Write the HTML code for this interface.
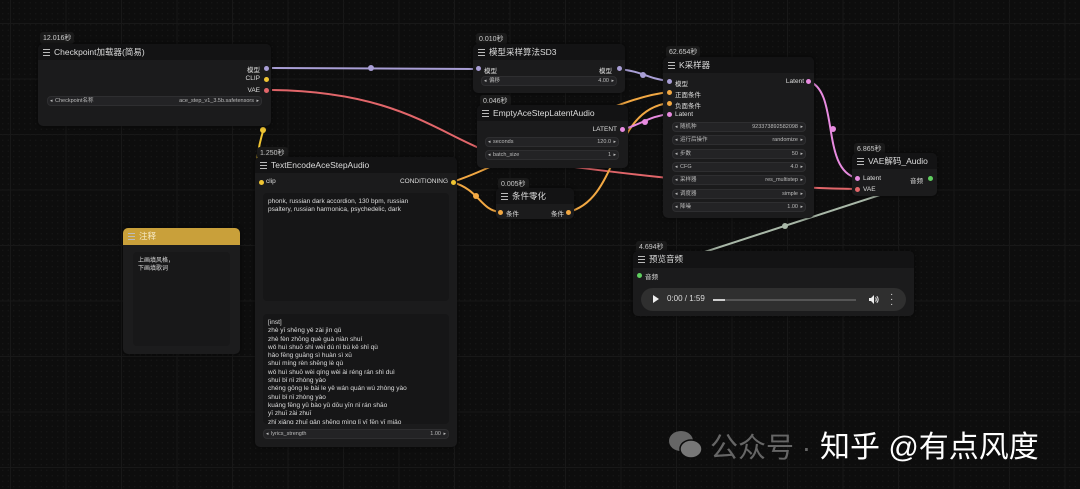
<!DOCTYPE html>
<html><head><meta charset="utf-8"><style>
*{margin:0;padding:0;box-sizing:border-box}
body{width:1080px;height:489px;overflow:hidden;background:#0d0d0d;position:relative;font-family:"Liberation Sans","Noto Sans CJK SC",sans-serif;color:#ddd}
.grid{position:absolute;inset:0;background-image:linear-gradient(#181818 1px,transparent 1px),linear-gradient(90deg,#181818 1px,transparent 1px);background-size:55.5px 55.5px;background-position:10px 23px}
.dots{position:absolute;inset:0;background-image:radial-gradient(#161616 0.6px,transparent 0.8px);background-size:5.5px 5.5px}
.node{position:absolute;background:#1b1b1c;border-radius:5px;box-shadow:0 0 4px rgba(0,0,0,.6)}
.hd{height:16px;background:#131314;border-radius:5px 5px 0 0;font-size:8.5px;line-height:16px;padding-left:16px;position:relative;color:#ddd;white-space:nowrap}
.hd:before{content:"";position:absolute;left:5px;top:5px;width:7px;height:5px;border-top:1px solid #bbb;border-bottom:1px solid #bbb}
.hd:after{content:"";position:absolute;left:5px;top:7.5px;width:7px;height:1px;background:#bbb}
.badge{position:absolute;font-size:7px;color:#ccc;background:#1a1a1a;padding:1px 3px;border-radius:3px;white-space:nowrap}
.lbl{position:absolute;font-size:6.5px;color:#ddd;white-space:nowrap}
.dot{position:absolute;width:5px;height:5px;border-radius:50%}
.w{position:absolute;height:10px;background:#232325;border:1px solid #2e2e30;border-radius:4px;font-size:5.5px;line-height:8px;color:#bbb;padding:0 7px;white-space:nowrap}
.w span{float:right}
.w:before{content:"◂";position:absolute;left:2px;font-size:5px}
.w:after{content:"▸";position:absolute;right:2px;font-size:5px;top:0}
.ta{position:absolute;background:#161617;border-radius:4px;font-size:6.5px;line-height:8.3px;color:#ddd;padding:5px 5px;overflow:hidden}
</style></head><body>
<div class="grid"></div><div class="dots"></div>
<svg width="1080" height="489" style="position:absolute;left:0;top:0" fill="none">
<path d="M272,68 L478,69" stroke="#a99fd6" stroke-width="2"/>
<path d="M619,69 C645,72 645,78 669,81" stroke="#a99fd6" stroke-width="2"/>
<path d="M272,90 C420,92 450,150 520,160 C600,170 700,186 857,189" stroke="#e2666a" stroke-width="2"/>
<path d="M264,128 C257,150 255,170 259,182" stroke="#f0c533" stroke-width="2"/>
<path d="M452,182 C520,160 600,100 669,92" stroke="#f2a843" stroke-width="2"/>
<path d="M452,182 C480,190 480,210 500,212" stroke="#f2a843" stroke-width="2"/>
<path d="M568,212 C620,200 610,110 669,103" stroke="#f2a843" stroke-width="2"/>
<path d="M621,130 C640,125 650,116 669,114" stroke="#e88be0" stroke-width="2"/>
<path d="M808,81 C840,90 820,170 857,178" stroke="#e88be0" stroke-width="2"/>
<path d="M932,178 L640,273" stroke="#a9b8a8" stroke-width="2"/>
<circle cx="371" cy="68" r="3" fill="#a99fd6"/><circle cx="643" cy="75" r="3" fill="#a99fd6"/>
<circle cx="263" cy="130" r="3" fill="#f0c533"/><circle cx="476" cy="196" r="3" fill="#f2a843"/>
<circle cx="645" cy="122" r="3" fill="#e88be0"/><circle cx="833" cy="129" r="3" fill="#e88be0"/>
<circle cx="785" cy="226" r="3" fill="#a9b8a8"/>
</svg>

<div class="badge" style="left:40px;top:32px">12.016秒</div>
<div class="node" style="left:38px;top:44px;width:233px;height:82px"><div class="hd">Checkpoint加载器(简易)</div></div>
<div class="lbl" style="right:820px;top:64px">模型</div><div class="dot" style="left:264px;top:66px;background:#a99fd6"></div>
<div class="lbl" style="right:820px;top:75px">CLIP</div><div class="dot" style="left:264px;top:77px;background:#f0c533"></div>
<div class="lbl" style="right:820px;top:87px">VAE</div><div class="dot" style="left:264px;top:88px;background:#e2666a"></div>
<div class="w" style="left:47px;top:96px;width:215px">Checkpoint名称<span>ace_step_v1_3.5b.safetensors</span></div>

<div class="badge" style="left:476px;top:33px">0.010秒</div>
<div class="node" style="left:473px;top:44px;width:152px;height:49px"><div class="hd">模型采样算法SD3</div></div>
<div class="dot" style="left:476px;top:66px;background:#a99fd6"></div><div class="lbl" style="left:484px;top:65px">模型</div>
<div class="lbl" style="right:468px;top:65px">模型</div><div class="dot" style="left:617px;top:66px;background:#a99fd6"></div>
<div class="w" style="left:481px;top:76px;width:136px">偏移<span>4.00</span></div>

<div class="badge" style="left:480px;top:95px">0.046秒</div>
<div class="node" style="left:477px;top:105px;width:151px;height:63px"><div class="hd">EmptyAceStepLatentAudio</div></div>
<div class="lbl" style="right:463px;top:126px">LATENT</div><div class="dot" style="left:620px;top:127px;background:#e88be0"></div>
<div class="w" style="left:485px;top:137px;width:134px">seconds<span>120.0</span></div>
<div class="w" style="left:485px;top:150px;width:134px">batch_size<span>1</span></div>

<div class="badge" style="left:666px;top:46px">62.654秒</div>
<div class="node" style="left:663px;top:57px;width:151px;height:161px"><div class="hd">K采样器</div></div>
<div class="dot" style="left:667px;top:79px;background:#a99fd6"></div><div class="lbl" style="left:675px;top:78px">模型</div>
<div class="lbl" style="right:276px;top:78px">Latent</div><div class="dot" style="left:806px;top:79px;background:#e88be0"></div>
<div class="dot" style="left:667px;top:90px;background:#f2a843"></div><div class="lbl" style="left:675px;top:89px">正面条件</div>
<div class="dot" style="left:667px;top:101px;background:#f2a843"></div><div class="lbl" style="left:675px;top:100px">负面条件</div>
<div class="dot" style="left:667px;top:112px;background:#e88be0"></div><div class="lbl" style="left:675px;top:111px">Latent</div>
<div class="w" style="left:672px;top:122px;width:134px">随机种<span>923373892582098</span></div>
<div class="w" style="left:672px;top:135px;width:134px">运行后操作<span>randomize</span></div>
<div class="w" style="left:672px;top:149px;width:134px">步数<span>50</span></div>
<div class="w" style="left:672px;top:162px;width:134px">CFG<span>4.0</span></div>
<div class="w" style="left:672px;top:175px;width:134px">采样器<span>res_multistep</span></div>
<div class="w" style="left:672px;top:189px;width:134px">调度器<span>simple</span></div>
<div class="w" style="left:672px;top:202px;width:134px">降噪<span>1.00</span></div>

<div class="badge" style="left:854px;top:143px">6.865秒</div>
<div class="node" style="left:852px;top:153px;width:85px;height:43px"><div class="hd">VAE解码_Audio</div></div>
<div class="dot" style="left:855px;top:176px;background:#e88be0"></div><div class="lbl" style="left:863px;top:175px">Latent</div>
<div class="dot" style="left:855px;top:187px;background:#e2666a"></div><div class="lbl" style="left:863px;top:186px">VAE</div>
<div class="lbl" style="left:910px;top:175px">音频</div><div class="dot" style="left:928px;top:176px;background:#5fce5f"></div>

<div class="badge" style="left:257px;top:147px">1.250秒</div>
<div class="node" style="left:255px;top:157px;width:202px;height:290px"><div class="hd">TextEncodeAceStepAudio</div></div>
<div class="dot" style="left:259px;top:180px;background:#f0c533"></div><div class="lbl" style="left:266px;top:178px">clip</div>
<div class="lbl" style="right:632px;top:178px">CONDITIONING</div><div class="dot" style="left:451px;top:180px;background:#f0c533"></div>
<div class="ta" style="left:263px;top:193px;width:186px;height:108px;padding-right:22px">phonk, russian dark accordion, 130 bpm, russian psaltery, russian harmonica, psychedelic, dark</div>
<div class="ta" style="left:263px;top:314px;width:186px;height:110px">[inst]<br>zhè yī shēng yě zài jìn qǔ<br>zhè fèn zhōng què guà niàn shuí<br>wǒ huì shuō shì wèi dú nǐ bù kě shǐ qù<br>hǎo fēng guāng sì huàn sì xū<br>shuí míng rèn shēng lè qù<br>wǒ huì shuō wèi qíng wèi ài réng rán shì duì<br>shuí bǐ nǐ zhòng yào<br>chéng gōng le bài le yě wán quán wú zhòng yào<br>shuí bǐ nǐ zhòng yào<br>kuáng fēng yǔ bào yǔ dōu yīn nǐ rán shāo<br>yī zhuī zài zhuī<br>zhǐ xiǎng zhuī gǎn shēng mìng lǐ yī fēn yī miǎo</div>
<div class="w" style="left:263px;top:429px;width:186px">lyrics_strength<span>1.00</span></div>

<div class="badge" style="left:498px;top:178px">0.005秒</div>
<div class="node" style="left:496px;top:188px;width:78px;height:31px"><div class="hd">条件零化</div></div>
<div class="dot" style="left:498px;top:210px;background:#f2a843"></div><div class="lbl" style="left:506px;top:208px">条件</div>
<div class="lbl" style="right:516px;top:208px">条件</div><div class="dot" style="left:566px;top:210px;background:#f2a843"></div>

<div class="node" style="left:123px;top:228px;width:117px;height:126px;background:#1c1c1d"><div class="hd" style="background:#c9a03a;color:#f5e7c0;height:17px">注释</div>
<div class="ta" style="left:10px;top:24px;width:97px;height:94px;font-size:6px;background:#181819">上画填风格，<br>下画填歌词</div></div>

<div class="badge" style="left:636px;top:241px">4.694秒</div>
<div class="node" style="left:633px;top:251px;width:281px;height:65px"><div class="hd" style="height:17px;line-height:17px">预览音频</div></div>
<div class="dot" style="left:637px;top:273px;background:#5fce5f"></div><div class="lbl" style="left:645px;top:271px">音频</div>
<div style="position:absolute;left:641px;top:288px;width:265px;height:23px;background:#2f2f2f;border-radius:12px;font-size:8px;color:#ddd">
<div style="position:absolute;left:12px;top:7px;width:0;height:0;border-left:6px solid #eee;border-top:4px solid transparent;border-bottom:4px solid transparent"></div>
<div style="position:absolute;left:26px;top:6px">0:00 / 1:59</div>
<div style="position:absolute;left:72px;top:11px;width:143px;height:2px;background:#555"><div style="width:12px;height:2px;background:#ccc"></div></div>
<svg style="position:absolute;left:227px;top:6px" width="11" height="11" viewBox="0 0 11 11"><path d="M1 4h2l3-3v9l-3-3H1z" fill="#eee"/><path d="M7.5 3.5c1 1 1 3 0 4M8.8 2.2c1.8 1.8 1.8 4.8 0 6.6" stroke="#eee" stroke-width="1" fill="none"/></svg>
<div style="position:absolute;left:249px;top:4px;font-size:10px;line-height:5px;width:3px">·<br>·<br>·</div>
</div>

<svg style="position:absolute;left:668px;top:428px" width="36" height="34" viewBox="0 0 36 34"><ellipse cx="13" cy="13" rx="12" ry="10" fill="#666"/><ellipse cx="23" cy="21" rx="11" ry="9" fill="#777" stroke="#0d0d0d" stroke-width="1.5"/></svg>
<div style="position:absolute;left:710px;top:426px;font-size:28px;color:#666;white-space:nowrap">公众号 ·</div>
<div style="position:absolute;left:820px;top:422px;font-size:30px;color:#fff;white-space:nowrap">知乎 @有点风度</div>
</body></html>
